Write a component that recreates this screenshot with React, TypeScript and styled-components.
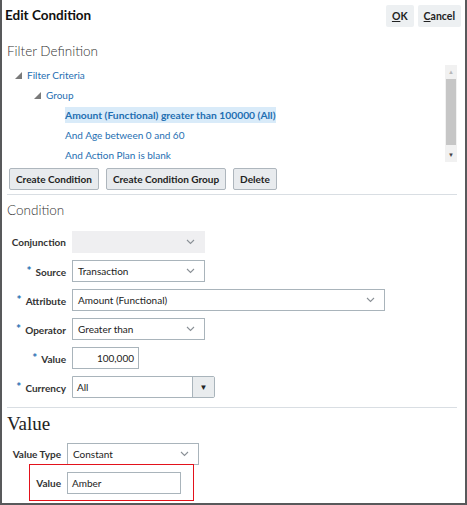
import * as React from 'react';
import styled, { createGlobalStyle } from 'styled-components';

const GlobalStyle = createGlobalStyle`
  html, body {
    margin: 0;
    padding: 0;
    background: #fff;
  }
  body {
    font-family: Lato, "Liberation Sans", sans-serif;
    color: #333;
  }
`;

interface TreeItem {
  label: string;
  level: number;
  toggle?: boolean;
  selected?: boolean;
}

const treeItems: Array<TreeItem> = [
  { label: 'Filter Criteria', level: 0, toggle: true },
  { label: 'Group', level: 1, toggle: true },
  { label: 'Amount (Functional) greater than 100000 (All)', level: 2, selected: true },
  { label: 'And Age between 0 and 60', level: 2 },
  { label: 'And Action Plan is blank', level: 2 },
];

const Chevron = () => (
  <svg width="9" height="6" viewBox="0 0 9 6">
    <polyline points="1,1 4.5,4.5 8,1" fill="none" stroke="#8a9096" strokeWidth="1.1" />
  </svg>
);

const Toggle = () => (
  <svg width="7" height="7" viewBox="0 0 7 7">
    <polygon points="7,0 7,7 0,7" fill="#7a7a7a" />
  </svg>
);

const Required = () => <Star>*</Star>;

export default function App() {
  return (
    <>
      <GlobalStyle />
      <Frame>
        <Header>
          <Title>Edit Condition</Title>
          <HeaderActions>
            <HeaderButton><u>O</u>K</HeaderButton>
            <HeaderButton><u>C</u>ancel</HeaderButton>
          </HeaderActions>
        </Header>

        <Section>
          <Heading top={15}>Filter Definition</Heading>
          <TreeBox>
            <TreeList>
              {treeItems.map((item) => (
                <TreeRow key={item.label} level={item.level}>
                  <ToggleSlot>{item.toggle && <Toggle />}</ToggleSlot>
                  <TreeLabel selected={item.selected}>{item.label}</TreeLabel>
                </TreeRow>
              ))}
            </TreeList>
            <Scrollbar>
              <ScrollArrow>▲</ScrollArrow>
              <ScrollThumb />
              <ScrollArrow dark>▼</ScrollArrow>
            </Scrollbar>
          </TreeBox>
          <ButtonRow>
            <ActionButton>Create Condition</ActionButton>
            <ActionButton>Create Condition Group</ActionButton>
            <ActionButton>Delete</ActionButton>
          </ButtonRow>
        </Section>

        <Divider top={4} />

        <Section>
          <Heading top={6}>Condition</Heading>
          <Form>
            <FieldRow>
              <Label>Conjunction</Label>
              <Select width={133} disabled>
                <span />
                <Chevron />
              </Select>
            </FieldRow>
            <FieldRow>
              <Label><Required />Source</Label>
              <Select width={133}>
                <span>Transaction</span>
                <Chevron />
              </Select>
            </FieldRow>
            <FieldRow>
              <Label><Required />Attribute</Label>
              <Select width={313}>
                <span>Amount (Functional)</span>
                <Chevron />
              </Select>
            </FieldRow>
            <FieldRow>
              <Label><Required />Operator</Label>
              <Select width={133}>
                <span>Greater than</span>
                <Chevron />
              </Select>
            </FieldRow>
            <FieldRow>
              <Label><Required />Value</Label>
              <Input width={67} align="right">100,000</Input>
            </FieldRow>
            <FieldRow>
              <Label><Required />Currency</Label>
              <Combo>
                <ComboText>All</ComboText>
                <ComboButton>▼</ComboButton>
              </Combo>
            </FieldRow>
          </Form>
        </Section>

        <Divider top={9} />

        <Section>
          <SerifHeading>Value</SerifHeading>
          <ValueForm>
            <FieldRow>
              <ValueLabel>Value Type</ValueLabel>
              <Select width={132}>
                <span>Constant</span>
                <Chevron />
              </Select>
            </FieldRow>
            <Highlight>
              <FieldRow>
                <ValueLabel narrow>Value</ValueLabel>
                <Input width={114}>Amber</Input>
              </FieldRow>
            </Highlight>
          </ValueForm>
        </Section>
      </Frame>
    </>
  );
}

const Frame = styled.div`
  box-sizing: border-box;
  width: 467px;
  height: 505px;
  border: 2px solid #58595b;
  border-top: none;
  overflow: hidden;
`;

const Header = styled.div`
  display: flex;
  justify-content: space-between;
  align-items: center;
  padding: 5px 4px 0 3px;
`;

const Title = styled.div`
  font-size: 13.5px;
  font-weight: 700;
  color: #111;
  margin-top: -2px;
`;

const HeaderActions = styled.div`
  display: flex;
  gap: 4px;
`;

const HeaderButton = styled.div`
  height: 22px;
  padding: 0 6px;
  display: flex;
  align-items: center;
  font-size: 10.5px;
  font-weight: 700;
  color: #222;
  background: #edf0f2;
  border-radius: 2px;
`;

const Section = styled.div`
  padding: 0 8px 0 3px;
`;

const Heading = styled.div<{ top: number }>`
  font-size: 13.5px;
  font-weight: 300;
  color: #333;
  padding: ${(p) => p.top}px 0 0 2px;
  line-height: 18px;
`;

const SerifHeading = styled.div`
  font-family: "Liberation Serif", serif;
  font-size: 19px;
  color: #222;
  padding: 4px 0 0 2px;
  line-height: 24px;
`;

const TreeBox = styled.div`
  display: flex;
  margin-top: 5px;
  height: 97px;
`;

const TreeList = styled.div`
  flex: 1;
`;

const TreeRow = styled.div<{ level: number }>`
  display: flex;
  align-items: center;
  height: 20px;
  padding-left: ${(p) => 10 + p.level * 19}px;
`;

const ToggleSlot = styled.span`
  display: inline-flex;
  flex: 0 0 12px;
  align-items: center;
`;

const TreeLabel = styled.span<{ selected?: boolean }>`
  font-size: ${(p) => (p.selected ? 10.3 : 10)}px;
  color: #1f6fb2;
  font-weight: ${(p) => (p.selected ? 700 : 400)};
  background: ${(p) => (p.selected ? '#d9ebf9' : 'transparent')};
  line-height: 16px;
  white-space: nowrap;
`;

const Scrollbar = styled.div`
  width: 12px;
  display: flex;
  flex-direction: column;
  align-items: stretch;
  background: #f1f1f1;
`;

const ScrollArrow = styled.div<{ dark?: boolean }>`
  height: 14px;
  font-size: 6px;
  line-height: 14px;
  text-align: center;
  color: ${(p) => (p.dark ? '#444' : '#b8b8b8')};
`;

const ScrollThumb = styled.div`
  flex: 1;
  margin: 0 1px 3px;
  background: #c6c6c6;
`;

const ButtonRow = styled.div`
  display: flex;
  gap: 7px;
  padding: 6px 0 0 4px;
`;

const ActionButton = styled.div`
  box-sizing: border-box;
  height: 22px;
  padding: 0 6px;
  display: flex;
  align-items: center;
  font-size: 10px;
  font-weight: 700;
  color: #222;
  background: #e8ebee;
  border: 1px solid #aeb6bd;
  border-radius: 2px;
`;

const Divider = styled.div<{ top: number }>`
  height: 1px;
  margin: ${(p) => p.top}px 8px 0 5px;
  background: #d9dee3;
`;

const Form = styled.div`
  display: flex;
  flex-direction: column;
  gap: 7px;
  padding-top: 12px;
`;

const ValueForm = styled.div`
  display: flex;
  flex-direction: column;
  padding-top: 7px;
`;

const FieldRow = styled.div`
  display: flex;
  align-items: center;
  gap: 6px;
`;

const Label = styled.div`
  width: 61px;
  text-align: right;
  font-size: 10px;
  font-weight: 700;
  color: #333;
  white-space: nowrap;
`;

const ValueLabel = styled.div<{ narrow?: boolean }>`
  width: ${(p) => (p.narrow ? 27 : 56)}px;
  text-align: right;
  font-size: 10px;
  font-weight: 700;
  color: #333;
  white-space: nowrap;
`;

const Star = styled.span`
  color: #1f6fb2;
  font-size: 12px;
  font-weight: 700;
  margin-right: 4px;
  position: relative;
  top: -1px;
`;

const Select = styled.div<{ width: number; disabled?: boolean }>`
  box-sizing: border-box;
  width: ${(p) => p.width}px;
  height: 22px;
  display: flex;
  align-items: center;
  justify-content: space-between;
  padding: 0 9px 0 5px;
  font-size: 10px;
  color: #222;
  background: ${(p) => (p.disabled ? '#efeff1' : '#fff')};
  border: 1px solid ${(p) => (p.disabled ? '#efeff1' : '#a9b4bb')};
`;

const Input = styled.div<{ width: number; align?: 'left' | 'right' }>`
  box-sizing: border-box;
  width: ${(p) => p.width}px;
  height: 22px;
  display: flex;
  align-items: center;
  justify-content: ${(p) => (p.align === 'right' ? 'flex-end' : 'flex-start')};
  padding: 0 4px;
  font-size: 10px;
  color: #222;
  border: 1px solid #a9b4bb;
`;

const Combo = styled.div`
  box-sizing: border-box;
  width: 143px;
  height: 22px;
  display: flex;
  border: 1px solid #a9b4bb;
  border-radius: 0 2px 2px 0;
`;

const ComboText = styled.div`
  flex: 1;
  display: flex;
  align-items: center;
  padding: 0 4px;
  font-size: 10px;
  color: #222;
`;

const ComboButton = styled.div`
  width: 21px;
  display: flex;
  align-items: center;
  justify-content: center;
  font-size: 8px;
  color: #222;
  background: #e9ecee;
  border-left: 1px solid #a9b4bb;
`;

const Highlight = styled.div`
  box-sizing: border-box;
  width: 165px;
  height: 37px;
  margin: -1px 0 0 24px;
  padding: 7px 0 0 4px;
  border: 1px solid #e3121b;
`;
